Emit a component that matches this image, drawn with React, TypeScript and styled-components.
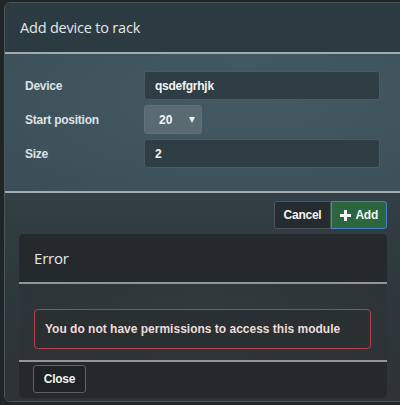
import styled, { createGlobalStyle } from 'styled-components';

const GlobalStyle = createGlobalStyle`
	html, body {
		margin: 0;
		padding: 0;
		background: #202528;
		overflow: hidden;
	}
	body {
		font-family: 'Liberation Sans', Arial, sans-serif;
		color: #e6e6e6;
	}
`;

const Page = styled.div`
	width: 400px;
	height: 405px;
	padding: 2px 0 0 4px;
	box-sizing: border-box;
`;

const Modal = styled.div`
	width: 402px;
	height: 400px;
	border: 1px solid #4c565b;
	border-radius: 6px;
	overflow: hidden;
	display: flex;
	flex-direction: column;
	box-sizing: border-box;
`;

const Header = styled.div`
	height: 51px;
	flex: none;
	background: #2c3a42;
	border-bottom: 2px solid #a3abaf;
	display: flex;
	align-items: center;
	padding-left: 15px;
	box-sizing: border-box;
`;

const Title = styled.h4<{ size?: number }>`
	margin: 0;
	font-family: 'Open Sans', 'Noto Sans', sans-serif;
	font-weight: 400;
	font-size: ${({ size }) => size ?? 15}px;
	color: #e4e8ea;
	letter-spacing: -0.2px;
`;

const Body = styled.div`
	flex: none;
	height: 137px;
	background: radial-gradient(ellipse at 60% 30%, #455962 0%, #3e525b 70%, #3b4e57 100%);
	padding: 17px 21px 0 20px;
	box-sizing: border-box;
	display: flex;
	flex-direction: column;
	gap: 5px;
`;

const Row = styled.div`
	display: grid;
	grid-template-columns: 119px 1fr;
	align-items: center;
	height: 29px;
`;

const Label = styled.label`
	font-size: 12px;
	font-weight: 700;
	letter-spacing: -0.25px;
	color: #dde2e4;
`;

const Input = styled.input`
	height: 29px;
	box-sizing: border-box;
	width: 236px;
	background: #2f3d44;
	border: 1px solid #4b5a61;
	border-radius: 3px;
	color: #f4f4f4;
	font-family: 'Liberation Sans', Arial, sans-serif;
	font-size: 12px;
	font-weight: 700;
	letter-spacing: -0.25px;
	padding: 0 10px;
	outline: none;
`;

const Select = styled.div`
	height: 29px;
	width: 58px;
	box-sizing: border-box;
	background: #5a6a72;
	border: 1px solid #627179;
	border-radius: 3px;
	display: flex;
	align-items: center;
	padding-left: 14px;
	gap: 17px;
	font-size: 12px;
	font-weight: 700;
	color: #f4f4f4;
`;

const Caret = styled.span`
	width: 0;
	height: 0;
	border-left: 3.5px solid transparent;
	border-right: 3.5px solid transparent;
	border-top: 6px solid #f0f0f0;
`;

const Footer = styled.div`
	flex: 1;
	border-top: 2px solid #a3abaf;
	background: linear-gradient(180deg, #333f46 0%, #2f383d 40%, #2d3336 100%);
	padding: 8px 18px 0 14px;
	display: flex;
	flex-direction: column;
	gap: 5px;
`;

const Actions = styled.div`
	display: flex;
	justify-content: flex-end;
`;

const Button = styled.button<{ variant?: 'default' | 'success' }>`
	height: 28px;
	box-sizing: border-box;
	font-family: 'Liberation Sans', Arial, sans-serif;
	font-size: 12px;
	font-weight: 700;
	letter-spacing: -0.25px;
	color: #f2f2f2;
	padding: 0 ${({ variant }) => (variant === 'success' ? 8 : 9)}px;
	border-radius: ${({ variant }) => (variant === 'success' ? '0 3px 3px 0' : '3px 0 0 3px')};
	background: ${({ variant }) => (variant === 'success' ? '#2b6640' : '#252c30')};
	border: 1px solid ${({ variant }) => (variant === 'success' ? '#4682c6' : '#4d565b')};
	display: inline-flex;
	align-items: center;
	gap: 4px;
	cursor: pointer;
`;

const ErrorModal = styled.div`
	height: 164px;
	flex: none;
	border-radius: 5px;
	overflow: hidden;
	display: flex;
	flex-direction: column;
	background: #2d3336;
`;

const ErrorHeader = styled.div`
	height: 50px;
	flex: none;
	background: #24292c;
	border-bottom: 2px solid #8f9598;
	display: flex;
	align-items: center;
	padding-left: 15px;
	box-sizing: border-box;
`;

const ErrorBody = styled.div`
	flex: 1;
	background: radial-gradient(ellipse at 50% 30%, #323a3d 0%, #2c3235 100%);
	padding: 25px 16px 0 15px;
`;

const Alert = styled.div`
	height: 40px;
	box-sizing: border-box;
	border: 1px solid #b3434c;
	border-radius: 4px;
	background: #2a2f32;
	display: flex;
	align-items: center;
	padding-left: 10px;
	font-size: 12px;
	font-weight: 700;
	color: #ecdcdd;
`;

const ErrorFooter = styled.div`
	height: 38px;
	flex: none;
	background: #25292c;
	border-top: 2px solid #8f9598;
	padding: 3px 0 0 14px;
	box-sizing: border-box;
`;

const CloseButton = styled.button`
	height: 28px;
	width: 53px;
	box-sizing: border-box;
	background: #1f2326;
	border: 1px solid #5a6267;
	border-radius: 3px;
	font-family: 'Liberation Sans', Arial, sans-serif;
	font-size: 12px;
	font-weight: 700;
	letter-spacing: -0.25px;
	color: #f2f2f2;
	cursor: pointer;
`;

const PlusIcon = () => (
	<svg width="11" height="11" viewBox="0 0 11 11">
		<path d="M4 0h3v4h4v3H7v4H4V7H0V4h4z" fill="#f2f2f2" />
	</svg>
);

export default function App() {
	return (
		<Page>
			<GlobalStyle />
			<Modal>
				<Header>
					<Title size={14.5}>Add device to rack</Title>
				</Header>
				<Body>
					<Row>
						<Label>Device</Label>
						<Input readOnly value="qsdefgrhjk" />
					</Row>
					<Row>
						<Label>Start position</Label>
						<Select>
							20
							<Caret />
						</Select>
					</Row>
					<Row>
						<Label>Size</Label>
						<Input readOnly value="2" />
					</Row>
				</Body>
				<Footer>
					<Actions>
						<Button>Cancel</Button>
						<Button variant="success">
							<PlusIcon />
							Add
						</Button>
					</Actions>
					<ErrorModal>
						<ErrorHeader>
							<Title size={15}>Error</Title>
						</ErrorHeader>
						<ErrorBody>
							<Alert>You do not have permissions to access this module</Alert>
						</ErrorBody>
						<ErrorFooter>
							<CloseButton>Close</CloseButton>
						</ErrorFooter>
					</ErrorModal>
				</Footer>
			</Modal>
		</Page>
	);
}
